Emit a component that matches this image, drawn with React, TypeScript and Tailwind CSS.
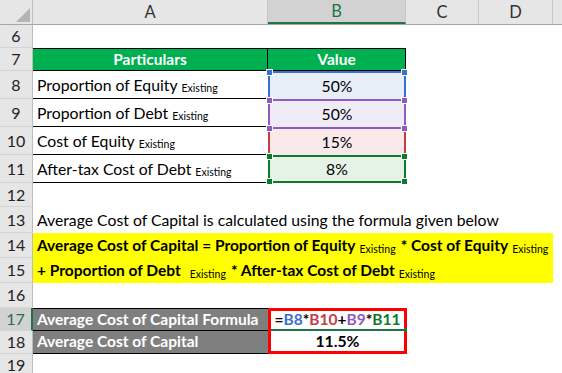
import React from "react";

const Sub = ({ bold = false }: { bold?: boolean }) => (
  <span className={`text-[10.5px] relative top-[4px] ml-[4px] ${bold ? "font-bold" : "font-normal"}`}>Existing</span>
);

const RowHead = ({ n, h, sel = false }: { n: number; h: string; sel?: boolean }) => (
  <div
    className={`${h} w-[33px] shrink-0 flex items-center justify-center text-[16px] border-b border-[#d4d4d4] ${
      sel ? "bg-[#d2d2d2] text-[#217346] border-r-2 border-r-[#217346]" : "bg-[#e6e6e6] text-[#222] border-r border-r-[#bdbdbd]"
    }`}
  >
    {n}
  </div>
);

const Sq = ({ c, pos }: { c: string; pos: string }) => (
  <div className={`absolute w-[7px] h-[7px] ${c} border border-white z-10 ${pos}`} />
);

type HL = { fill: string; side: string; top: string; topSq: string; bottom?: string };

const BCell = ({ v, hl }: { v: string; hl: HL }) => (
  <div
    className={`relative w-[138px] shrink-0 flex items-center justify-center border-x-2 border-t-2 ${hl.fill} ${hl.side} ${hl.top} ${
      hl.bottom ? "border-b-2 " + hl.bottom : ""
    }`}
  >
    {v}
    <Sq c={hl.topSq} pos="-left-[4px] -top-[4px]" />
    <Sq c={hl.topSq} pos="-right-[4px] -top-[4px]" />
    {hl.bottom && (
      <>
        <Sq c="bg-[#0b7a2c]" pos="-left-[4px] -bottom-[4px]" />
        <Sq c="bg-[#0b7a2c]" pos="-right-[4px] -bottom-[4px]" />
      </>
    )}
  </div>
);

export default function App() {
  const rows = [
    { n: 8, label: "Proportion of Equity", v: "50%", hl: { fill: "bg-[#e8eef8]", side: "border-x-[#3a6fd0]", top: "border-t-[#3a6fd0]", topSq: "bg-[#3a6fd0]" } },
    { n: 9, label: "Proportion of Debt", v: "50%", hl: { fill: "bg-[#f0ecf7]", side: "border-x-[#8e5bbf]", top: "border-t-[#8e5bbf]", topSq: "bg-[#8e5bbf]" } },
    { n: 10, label: "Cost of Equity", v: "15%", hl: { fill: "bg-[#fae9ea]", side: "border-x-[#c43c44]", top: "border-t-[#8e5bbf]", topSq: "bg-[#8e5bbf]" } },
    { n: 11, label: "After-tax Cost of Debt", v: "8%", hl: { fill: "bg-[#e5f2e6]", side: "border-x-[#0b7a2c]", top: "border-t-[#0b7a2c]", topSq: "bg-[#0b7a2c]", bottom: "border-b-[#0b7a2c]" } },
  ];

  return (
    <div className="w-[562px] h-[373px] overflow-hidden bg-white font-[Lato,sans-serif] text-[15.75px] text-black leading-none">
      {/* column headers */}
      <div className="flex h-[25px] bg-[#e6e6e6] border-b border-[#a6a6a6] text-[16.5px] text-[#333]">
        <div className="w-[33px] shrink-0 border-r border-[#bdbdbd] relative">
          <svg width="33" height="25" className="absolute left-0 top-0">
            <polygon points="30,8 30,22 16,22" fill="#b4b4b4" />
          </svg>
        </div>
        <div className="w-[235px] shrink-0 flex items-center justify-center border-r border-[#c8c8c8]">A</div>
        <div className="w-[138px] shrink-0 flex items-center justify-center bg-[#d2d2d2] border-b-2 border-[#217346] border-r border-r-[#c8c8c8] text-[#217346]">B</div>
        <div className="w-[73px] shrink-0 flex items-center justify-center border-r border-[#c8c8c8]">C</div>
        <div className="w-[74px] shrink-0 flex items-center justify-center border-r border-[#c8c8c8]">D</div>
        <div className="flex-1" />
      </div>

      {/* row 6 */}
      <div className="flex h-[23px]">
        <RowHead n={6} h="h-[23px]" />
        <div className="flex-1" />
      </div>

      {/* row 7 */}
      <div className="flex h-[23px]">
        <RowHead n={7} h="h-[23px]" />
        <div className="w-[235px] shrink-0 bg-[#00b050] border-y border-r border-black text-white font-bold text-[15.5px] flex items-center justify-center">Particulars</div>
        <div className="w-[138px] shrink-0 bg-[#00b050] border-y border-r border-black text-white font-bold text-[15.5px] flex items-center justify-center">Value</div>
        <div className="flex-1" />
      </div>

      {rows.map((r) => (
        <div key={r.n} className="flex h-[28px]">
          <RowHead n={r.n} h="h-[28px]" />
          <div className="w-[235px] shrink-0 border-b border-black flex items-center pl-[4px] whitespace-nowrap">
            {r.label}
            <Sub />
          </div>
          <BCell v={r.v} hl={r.hl} />
          <div className="flex-1" />
        </div>
      ))}

      {/* row 12 */}
      <div className="flex h-[24px]">
        <RowHead n={12} h="h-[24px]" />
        <div className="flex-1" />
      </div>

      {/* row 13 */}
      <div className="flex h-[26px]">
        <RowHead n={13} h="h-[26px]" />
        <div className="flex-1 flex items-center pl-[4px] whitespace-nowrap">
          Average Cost of Capital is calculated using the formula given below
        </div>
      </div>

      {/* row 14 */}
      <div className="flex h-[25px]">
        <RowHead n={14} h="h-[25px]" />
        <div className="w-[520px] shrink-0 bg-[#ffff00] font-bold text-[15.5px] flex items-center pl-[4px] whitespace-nowrap">
          Average Cost of Capital = Proportion of Equity
          <Sub />
          <span className="ml-[5px]">* Cost of Equity</span>
          <Sub />
        </div>
        <div className="flex-1" />
      </div>

      {/* row 15 */}
      <div className="flex h-[25px]">
        <RowHead n={15} h="h-[25px]" />
        <div className="w-[520px] shrink-0 bg-[#ffff00] font-bold text-[15.5px] flex items-center pl-[4px] whitespace-nowrap">
          + Proportion of Debt
          <span className="ml-[5px]"></span>
          <Sub />
          <span className="ml-[5px]">* After-tax Cost of Debt</span>
          <Sub />
        </div>
        <div className="flex-1" />
      </div>

      {/* row 16 */}
      <div className="flex h-[25px]">
        <RowHead n={16} h="h-[25px]" />
        <div className="flex-1" />
      </div>

      {/* row 17 */}
      <div className="flex h-[23px]">
        <RowHead n={17} h="h-[23px]" sel />
        <div className="w-[235px] shrink-0 bg-[#7f7f7f] border-y border-black text-white font-bold text-[15.5px] flex items-center pl-[4px] whitespace-nowrap">
          Average Cost of Capital Formula
        </div>
        <div className="relative w-[139px] shrink-0 border-x-[3px] border-t-[3px] border-[#ff0000] flex items-center justify-center font-bold text-[15.5px]">
          <div className="border-b-2 border-[#217346] w-full h-full flex items-center justify-center">
            <span>=</span>
            <span className="text-[#3a6fd0]">B8</span>
            <span>*</span>
            <span className="text-[#c43c44]">B10</span>
            <span>+</span>
            <span className="text-[#8e5bbf]">B9</span>
            <span>*</span>
            <span className="text-[#0b7a2c]">B11</span>
          </div>
          <div className="absolute -right-[3px] -bottom-[1px] w-[3px] h-[4px] bg-[#217346]" />
        </div>
        <div className="flex-1" />
      </div>

      {/* row 18 */}
      <div className="flex h-[23px]">
        <RowHead n={18} h="h-[23px]" />
        <div className="w-[235px] shrink-0 bg-[#7f7f7f] border-b border-black text-white font-bold text-[15.5px] flex items-center pl-[4px] whitespace-nowrap">
          Average Cost of Capital
        </div>
        <div className="w-[139px] shrink-0 border-x-[3px] border-b-[3px] border-[#ff0000] flex items-center justify-center font-bold">
          11.5%
        </div>
        <div className="flex-1" />
      </div>

      {/* row 19 */}
      <div className="flex h-[23px]">
        <RowHead n={19} h="h-[23px]" />
        <div className="flex-1" />
      </div>
    </div>
  );
}
